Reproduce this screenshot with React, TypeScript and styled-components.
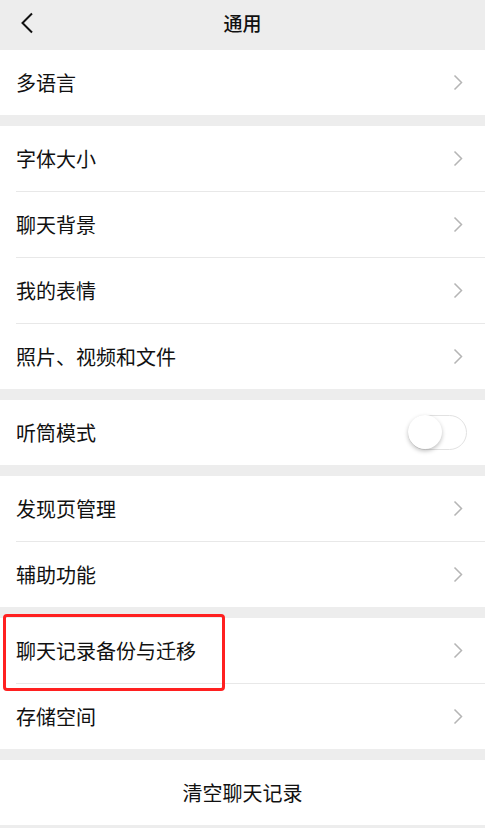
import styled, { createGlobalStyle } from "styled-components";

const GlobalStyle = createGlobalStyle`
  html, body {
    margin: 0;
    padding: 0;
    background: #ededed;
    font-family: "Noto Sans CJK SC", "Noto Sans", sans-serif;
    color: #111;
  }
  * {
    box-sizing: border-box;
  }
`;

type Item = {
  label: string;
  toggle?: boolean;
  marked?: boolean;
};

const groups: Item[][] = [
  [{ label: "多语言" }],
  [
    { label: "字体大小" },
    { label: "聊天背景" },
    { label: "我的表情" },
    { label: "照片、视频和文件" },
  ],
  [{ label: "听筒模式", toggle: true }],
  [{ label: "发现页管理" }, { label: "辅助功能" }],
  [{ label: "聊天记录备份与迁移", marked: true }, { label: "存储空间" }],
];

export default function App() {
  return (
    <>
      <GlobalStyle />
      <Page>
        <Header>
          <BackButton>
            <svg width="14" height="22" viewBox="0 0 14 22">
              <path d="M12 1.5 L2.5 11 L12 20.5" fill="none" stroke="#111" strokeWidth="2" />
            </svg>
          </BackButton>
          <Title>通用</Title>
        </Header>

        {groups.map((group, gi) => (
          <Group key={gi}>
            {group.map((item, i) => (
              <Row key={item.label} last={i === group.length - 1}>
                <Label>{item.label}</Label>
                {item.toggle ? (
                  <Switch>
                    <Knob />
                  </Switch>
                ) : (
                  <Chevron />
                )}
                {item.marked && <Highlight />}
              </Row>
            ))}
          </Group>
        ))}

        <Group>
          <ClearButton>清空聊天记录</ClearButton>
        </Group>
      </Page>
    </>
  );
}

function Chevron() {
  return (
    <svg width="10" height="17" viewBox="0 0 10 17">
      <path d="M1.5 1.5 L8.5 8.5 L1.5 15.5" fill="none" stroke="#b5b5b5" strokeWidth="1.5" />
    </svg>
  );
}

const Page = styled.div`
  width: 485px;
  min-height: 828px;
  background: #ededed;
  display: flex;
  flex-direction: column;
  gap: 11px;
`;

const Header = styled.header`
  height: 50px;
  padding-bottom: 5px;
  display: flex;
  align-items: center;
  justify-content: center;
  position: relative;
  background: #ededed;
  margin-bottom: -11px;
`;

const BackButton = styled.div`
  position: absolute;
  left: 20px;
  top: 12px;
  display: flex;
`;

const Title = styled.h1`
  margin: 0;
  font-size: 19px;
  line-height: 1;
  font-weight: 500;
`;

const Group = styled.section`
  background: #fff;
  display: flex;
  flex-direction: column;
`;

const Row = styled.div<{ last?: boolean }>`
  position: relative;
  height: ${(p) => (p.last ? "65px" : "66px")};
  margin-left: 16px;
  padding-right: 22px;
  display: flex;
  align-items: center;
  justify-content: space-between;
  border-bottom: ${(p) => (p.last ? "none" : "1px solid #e8e8e8")};
`;

const Label = styled.span`
  font-size: 20px;
  line-height: 1;
`;

const Switch = styled.div`
  width: 59px;
  height: 35px;
  margin-right: -4px;
  border-radius: 18px;
  border: 1.5px solid #e2e2e2;
  background: #fff;
  position: relative;
`;

const Knob = styled.div`
  position: absolute;
  left: -1px;
  top: -1px;
  width: 34px;
  height: 34px;
  border-radius: 50%;
  background: #fff;
  box-shadow: 0 2px 4px rgba(0, 0, 0, 0.25);
`;

const Highlight = styled.div`
  position: absolute;
  left: -13px;
  top: -4px;
  width: 222px;
  height: 77px;
  border: 3px solid #ff2020;
  border-radius: 4px;
  pointer-events: none;
`;

const ClearButton = styled.div`
  height: 65px;
  display: flex;
  align-items: center;
  justify-content: center;
  font-size: 20px;
`;
